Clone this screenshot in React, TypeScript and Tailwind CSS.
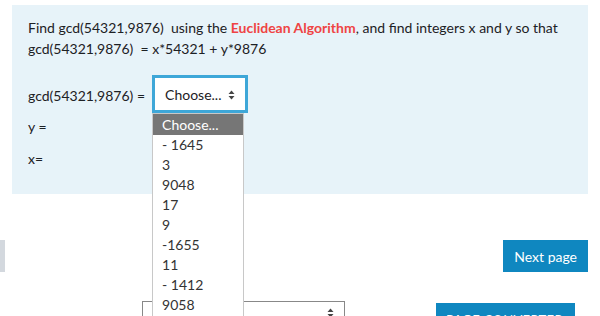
const OPTIONS = ["- 1645", "3", "9048", "17", "9", "-1655", "11", "- 1412", "9058"];

function UpDown() {
  return (
    <svg width="7" height="10" viewBox="0 0 7 10" className="ml-[7px]">
      <path d="M3.5 0.5 L6.5 4 L0.5 4 Z" fill="#444" />
      <path d="M0.5 6 L6.5 6 L3.5 9.5 Z" fill="#444" />
    </svg>
  );
}

export default function App() {
  return (
    <div
      className="w-[600px] h-[316px] overflow-hidden bg-white text-[#1d2125]"
      style={{ fontFamily: 'Lato, "Noto Sans", sans-serif' }}
    >
      <div className="pt-[5px] pl-[12px] pr-[12px]">
        <section className="bg-[#e7f3f9] h-[189px] pl-[16px] pt-[12px] text-[14px] leading-[21px]">
          <p>
            Find gcd(54321,9876)&nbsp; using the{" "}
            <span className="font-bold text-[#ef4444]">Euclidean Algorithm</span>, and find integers x and y so
            that
            <br />
            gcd(54321,9876)&nbsp; = x*54321 + y*9876
          </p>

          <div className="flex items-center mt-[16px]">
            <span className="mt-[2px]">gcd(54321,9876) =</span>
            <div className="relative ml-[7px]">
              <div className="flex items-center w-[96px] h-[38px] border-[3px] border-[#3ea7d8] bg-white pl-[10px] pt-[1px]">
                <span>Choose...</span>
                <UpDown />
              </div>
              <ul className="absolute left-0 top-[38px] w-[92px] bg-white border border-[#c8c8c8] z-10 text-[14px] leading-[20px] pb-[2px]">
                <li className="bg-[#767676] text-white pl-[9px] pt-[1px]">Choose...</li>
                {OPTIONS.map((o) => (
                  <li key={o} className="pl-[9px] text-[#333]">
                    {o}
                  </li>
                ))}
              </ul>
            </div>
          </div>

          <div className="mt-[3px]">y =</div>
          <div className="mt-[11px]">x=</div>
        </section>
      </div>

      <div className="flex items-center justify-between mt-[46px] pr-[12px]">
        <div className="w-[5px] h-[32px] bg-[#d3d8de]" />
        <button className="h-[32px] px-[11px] bg-[#0f87c0] text-white text-[14px]">Next page</button>
      </div>

      <div className="flex mt-[29px]">
        <div className="ml-[142px] w-[203px] h-[30px] border border-[#888] border-b-0 flex justify-end pr-[10px] pt-[6px]">
          <UpDown />
        </div>
        <button className="ml-[91px] mt-[2px] w-[139px] h-[30px] bg-[#0f87c0] text-white text-[13px] tracking-wide text-left pl-[10px] pt-[4px] leading-[20px] self-start">
          PAGE CONVERTER
        </button>
      </div>
    </div>
  );
}
